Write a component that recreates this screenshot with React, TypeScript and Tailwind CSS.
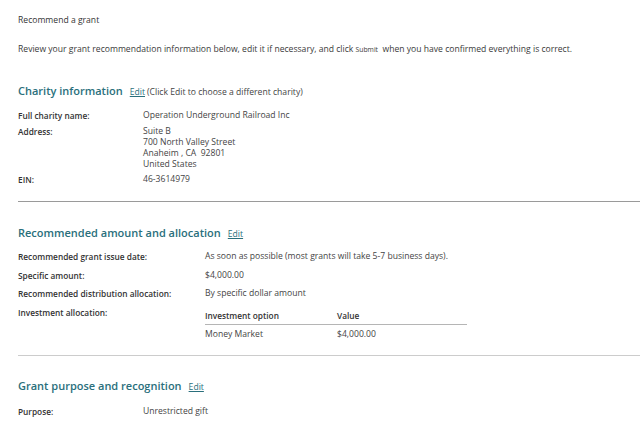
import React from "react"

const font = { fontFamily: '"Open Sans", "Liberation Sans", sans-serif' }

function EditLink() {
  return <a className="text-[8.6px] text-[#2a6f7c] underline underline-offset-1 ml-[7px]">Edit</a>
}

function Row({ label, children, labelW }: { label: string; children: React.ReactNode; labelW: string }) {
  return (
    <div className="flex">
      <div className={`${labelW} shrink-0 text-[8.3px] font-semibold text-[#333]`}>{label}</div>
      <div className="text-[#444]">{children}</div>
    </div>
  )
}

export default function App() {
  return (
    <div style={font} className="bg-white w-[640px] h-[421px] overflow-hidden pt-[14px] text-[8.6px] leading-[11px] text-[#333]">
      <div className="px-[18px]">
        <p className="leading-[12px]">Recommend a grant</p>
        <p className="mt-[17px] leading-[12px] text-[#3a3a3a]">
          Review your grant recommendation information below, edit it if necessary, and click{" "}
          <span className="text-[6.8px]">Submit</span>&nbsp; when you have confirmed everything is correct.
        </p>

        {/* Charity information */}
        <div className="mt-[27px] flex items-baseline">
          <h2 className="text-[11px] leading-[16px] font-semibold text-[#2a6f7c]">Charity information</h2>
          <EditLink />
          <span className="ml-[2px] text-[#444]">(Click Edit to choose a different charity)</span>
        </div>
        <div className="mt-[11px] flex flex-col gap-[4.5px]">
          <Row label="Full charity name:" labelW="w-[125px]">Operation Underground Railroad Inc</Row>
          <Row label="Address:" labelW="w-[125px]">
            <div>Suite B</div>
            <div>700 North Valley Street</div>
            <div>Anaheim , CA&nbsp; 92801</div>
            <div>United States</div>
          </Row>
          <Row label="EIN:" labelW="w-[125px]">46-3614979</Row>
        </div>
      </div>
      <div className="ml-[18px] mt-[16px] h-px bg-[#9a9a9a]" />

      {/* Recommended amount */}
      <div className="px-[18px]">
        <div className="mt-[23px] flex items-baseline">
          <h2 className="text-[11px] leading-[16px] font-semibold text-[#2a6f7c]">Recommended amount and allocation</h2>
          <EditLink />
        </div>
        <div className="mt-[10px] flex flex-col gap-[7.5px]">
          <Row label="Recommended grant issue date:" labelW="w-[187px]">
            As soon as possible (most grants will take 5-7 business days).
          </Row>
          <Row label="Specific amount:" labelW="w-[187px]">$4,000.00</Row>
          <Row label="Recommended distribution allocation:" labelW="w-[187px]">By specific dollar amount</Row>
          <Row label="Investment allocation:" labelW="w-[187px]">
            <div className="w-[262px] mt-[3px]">
              <div className="flex text-[8.3px] font-semibold text-[#333] pb-[3px] border-b border-[#b5b5b5]">
                <div className="w-[132px]">Investment option</div>
                <div>Value</div>
              </div>
              <div className="flex pt-[4px]">
                <div className="w-[132px]">Money Market</div>
                <div>$4,000.00</div>
              </div>
            </div>
          </Row>
        </div>
      </div>
      <div className="ml-[18px] mt-[15px] h-px bg-[#cccccc]" />

      {/* Grant purpose */}
      <div className="px-[18px]">
        <div className="mt-[22px] flex items-baseline">
          <h2 className="text-[11px] leading-[16px] font-semibold text-[#2a6f7c]">Grant purpose and recognition</h2>
          <EditLink />
        </div>
        <div className="mt-[12px]">
          <Row label="Purpose:" labelW="w-[125px]">Unrestricted gift</Row>
        </div>
      </div>
    </div>
  )
}
